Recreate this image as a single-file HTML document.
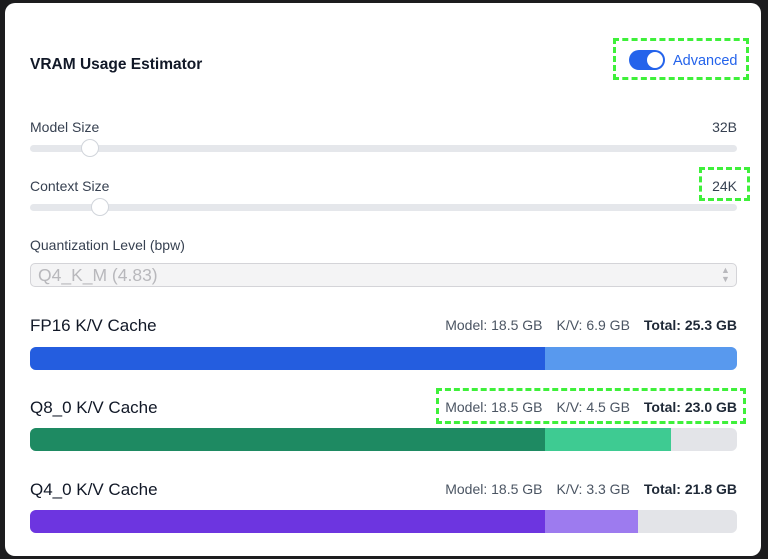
<!DOCTYPE html>
<html><head><meta charset="utf-8"><style>
*{box-sizing:border-box;margin:0;padding:0}
body{width:768px;height:559px;background:#1c1c1e;font-family:"Liberation Sans",sans-serif;position:relative;overflow:hidden}
.card{position:absolute;left:5px;top:3px;width:756px;height:553px;background:#fff;border-radius:10px}
.a{position:absolute;white-space:nowrap}
.lbl{font-size:14px;color:#374151}
.track{position:absolute;left:30px;width:707px;height:7px;background:#e5e7eb;border-radius:4px}
.thumb{position:absolute;width:18px;height:18px;border-radius:50%;background:#fff;border:1px solid #d1d5db}
.h{font-size:17px;color:#111827}
.st{font-size:14px;color:#4b5563;word-spacing:0}
.st span{margin-left:14px}
.st b{color:#1f2937;margin-left:14px}
.bar{position:absolute;left:30px;width:707px;height:23px;background:#e3e4e8;border-radius:6px;overflow:hidden}
.bar div{position:absolute;top:0;height:100%}
.gb{position:absolute;border:3px dashed #3ef03a}
</style></head><body>
<div class="card"></div>
<div class="a" style="left:30px;top:56px;font-size:15.5px;font-weight:bold;color:#111827">VRAM Usage Estimator</div>
<div class="a" style="left:629px;top:50px;width:36px;height:20px;border-radius:10px;background:#2463eb"></div>
<div class="a" style="left:647px;top:52px;width:16px;height:16px;border-radius:50%;background:#fff"></div>
<div class="a" style="left:673px;top:53px;font-size:14.5px;color:#2463eb">Advanced</div>
<div class="gb" style="left:613px;top:38px;width:136px;height:42px"></div>

<div class="a lbl" style="left:30px;top:119px">Model Size</div>
<div class="a lbl" style="right:31px;top:119px">32B</div>
<div class="track" style="top:145px"></div>
<div class="thumb" style="left:81px;top:139px"></div>

<div class="a lbl" style="left:30px;top:178px">Context Size</div>
<div class="a lbl" style="right:31px;top:178px">24K</div>
<div class="gb" style="left:699px;top:167px;width:51px;height:34px"></div>
<div class="track" style="top:204px"></div>
<div class="thumb" style="left:91px;top:198px"></div>

<div class="a lbl" style="left:30px;top:237px">Quantization Level (bpw)</div>
<div class="a" style="left:30px;top:263px;width:707px;height:24px;background:#f4f4f5;border:1px solid #d4d4d8;border-radius:5px"></div>
<div class="a" style="left:38px;top:265px;font-size:17.5px;color:#b8b8bc">Q4_K_M (4.83)</div>
<div class="a" style="left:721px;top:266px;font-size:9px;color:#b8b8bc;line-height:9px">▲<br>▼</div>

<div class="a h" style="left:30px;top:316px">FP16 K/V Cache</div>
<div class="a st" style="right:31px;top:317px">Model: 18.5 GB<span>K/V: 6.9 GB</span><b>Total: 25.3 GB</b></div>
<div class="bar" style="top:347px"><div style="left:0;width:515px;background:#245ddf"></div><div style="left:515px;width:192px;background:#5899ee"></div></div>

<div class="a h" style="left:30px;top:398px">Q8_0 K/V Cache</div>
<div class="a st" style="right:31px;top:399px">Model: 18.5 GB<span>K/V: 4.5 GB</span><b>Total: 23.0 GB</b></div>
<div class="gb" style="left:436px;top:388px;width:310px;height:36px"></div>
<div class="bar" style="top:428px"><div style="left:0;width:515px;background:#1e8a62"></div><div style="left:515px;width:126px;background:#3ecb92"></div></div>

<div class="a h" style="left:30px;top:480px">Q4_0 K/V Cache</div>
<div class="a st" style="right:31px;top:481px">Model: 18.5 GB<span>K/V: 3.3 GB</span><b>Total: 21.8 GB</b></div>
<div class="bar" style="top:510px"><div style="left:0;width:515px;background:#6d35e0"></div><div style="left:515px;width:93px;background:#9d7bef"></div></div>
</body></html>
